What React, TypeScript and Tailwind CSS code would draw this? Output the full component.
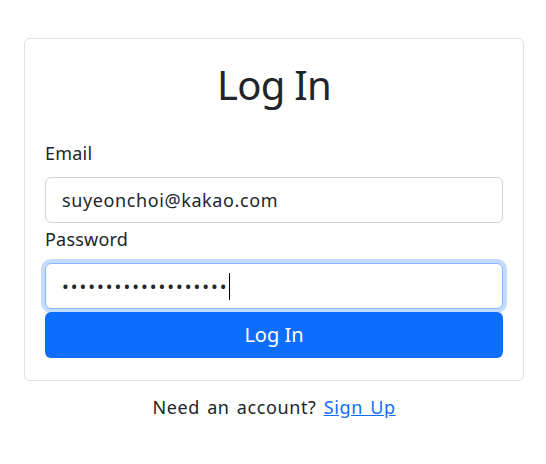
import React from 'react';

const font = { fontFamily: '"Noto Sans", "Noto Sans CJK KR", sans-serif' };

export default function App() {
  return (
    <div className="min-h-screen bg-white pt-[38px] pl-[24px] text-[#212529]" style={font}>
      <div className="w-[500px] rounded-md border border-[#dee2e6] bg-white px-5 pt-5 pb-[22px]">
        <h2 className="mb-[27px] text-center text-[40px] leading-[51px] font-normal tracking-[-0.7px]">Log In</h2>
        <form onSubmit={e => e.preventDefault()}>
          <label className="mb-2 block text-[18px] leading-[32px] tracking-[0.2px]">Email</label>
          <input
            type="email"
            defaultValue="suyeonchoi@kakao.com"
            className="block h-[46px] w-full rounded-md border border-[#ced4da] bg-white px-4 text-[18px] tracking-[0.6px] text-[#212529] outline-none"
          />
          <label className="mb-2 block text-[18px] leading-[32px] tracking-[0.2px]">Password</label>
          {/* focused password field, drawn with its caret */}
          <div
            role="textbox"
            className="flex h-[46px] w-full items-center rounded-md border border-[#86b7fe] bg-white px-4 shadow-[0_0_0_4px_rgba(13,110,253,0.25)]"
          >
            <span className="text-[18px] leading-none tracking-[2px] text-[#212529]">
              {'•'.repeat(19)}
            </span>
            <span className="h-[27px] w-[1px] bg-black" />
          </div>
          <button
            type="submit"
            className="relative mt-[3px] block h-[46px] w-full rounded-md bg-[#0d6efd] text-[20px] text-white"
          >
            Log In
          </button>
        </form>
      </div>
      <div className="mt-[13px] w-[500px] text-center text-[18px] leading-[27px] tracking-[0.6px] [word-spacing:2px]">
        Need an account?{' '}
        <a href="#" className="text-[#0d6efd] underline">Sign Up</a>
      </div>
    </div>
  );
}
